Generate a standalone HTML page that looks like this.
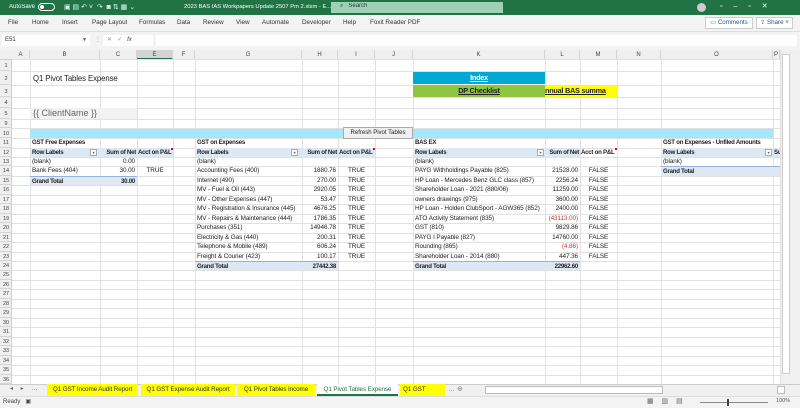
<!DOCTYPE html>
<html><head><meta charset="utf-8"><style>
*{margin:0;padding:0;box-sizing:border-box}
body{width:800px;height:408px;overflow:hidden;background:#fff;font-family:"Liberation Sans",sans-serif;position:relative;color:#222}
.a{position:absolute;white-space:nowrap;overflow:hidden}
.c{position:absolute;white-space:nowrap;overflow:hidden;font-size:6.4px;letter-spacing:-0.1px;height:9.4px;line-height:9.6px;padding:0 2px}
.r{text-align:right}.m{text-align:center}.b{font-weight:bold;font-size:6.1px;letter-spacing:-0.25px}
.hl{position:absolute;height:1px;background:#e1e1e1}
.vl{position:absolute;width:1px;background:#e1e1e1}
.hdr{background:#dde8f3}
.gt{background:#dde8f3;border-top:1px solid #95b3d7;font-weight:bold;font-size:6.1px;letter-spacing:-0.25px}
.dd{position:absolute;width:7px;height:7px;border:1px solid #aab;background:#fff;top:1px;font-size:4px;line-height:5px;text-align:center;color:#666}
.ch{position:absolute;top:50px;height:10px;font-size:6px;line-height:10px;text-align:center;color:#444;border-right:1px solid #d4d4d4}
.rh{position:absolute;left:0;width:12px;font-size:5.5px;color:#444;text-align:center;border-bottom:1px solid #d4d4d4}
.tab{position:absolute;top:384px;height:12px;font-size:6.3px;letter-spacing:-0.1px;line-height:12px;text-align:center;background:#ffff00;color:#333}
</style></head><body>
<!-- title bar -->
<div class="a" style="left:0;top:0;width:800px;height:15px;background:#217346"></div>
<div class="a" style="left:9px;top:4px;font-size:6px;color:#fff">AutoSave</div>
<div class="a" style="left:38px;top:3px;width:17px;height:8px;border:1px solid #fff;border-radius:5px"></div>
<div class="a" style="left:40px;top:5px;width:4px;height:4px;background:#fff;border-radius:50%"></div>
<div class="a" style="left:64px;top:3px;font-size:7px;color:#dfe">▣ ▤ ↶ ˅ &nbsp;↷ &nbsp;◙ ⇅ ▦ ⌄</div>
<div class="a" style="left:184px;top:4px;font-size:5.8px;color:#fff">2023 BAS IAS Workpapers Update 2507 Pm 2.xlsm - E...</div>
<div class="a" style="left:331px;top:2px;width:172px;height:11px;background:#9fd1b4"></div>
<div class="a" style="left:340px;top:3px;font-size:6px;color:#234">⌕ &nbsp;&nbsp;Search</div>
<div class="a" style="left:697px;top:3px;width:9px;height:9px;border-radius:50%;background:#ccc"></div>
<div class="a" style="left:720px;top:2px;font-size:7px;color:#fff;word-spacing:9px">▫ – ▫ ✕</div>
<!-- ribbon tabs -->
<div class="a" style="left:0;top:15px;width:800px;height:17px;background:#f3f3f3;border-bottom:1px solid #ddd"></div>
<div class="a" style="left:8px;top:19px;font-size:6.3px;color:#333">File</div>
<div class="a" style="left:32px;top:19px;font-size:6.3px;color:#333">Home</div>
<div class="a" style="left:62px;top:19px;font-size:6.3px;color:#333">Insert</div>
<div class="a" style="left:92px;top:19px;font-size:6.3px;color:#333">Page Layout</div>
<div class="a" style="left:139px;top:19px;font-size:6.3px;color:#333">Formulas</div>
<div class="a" style="left:177px;top:19px;font-size:6.3px;color:#333">Data</div>
<div class="a" style="left:203px;top:19px;font-size:6.3px;color:#333">Review</div>
<div class="a" style="left:236px;top:19px;font-size:6.3px;color:#333">View</div>
<div class="a" style="left:262px;top:19px;font-size:6.3px;color:#333">Automate</div>
<div class="a" style="left:302px;top:19px;font-size:6.3px;color:#333">Developer</div>
<div class="a" style="left:343px;top:19px;font-size:6.3px;color:#333">Help</div>
<div class="a" style="left:370px;top:19px;font-size:6.3px;color:#333">Foxit Reader PDF</div>
<div class="a" style="left:705px;top:17px;width:48px;height:12px;border:1px solid #ccc;background:#fff;font-size:6.2px;line-height:10px;text-align:center;color:#1e5a8a">▭ Comments</div>
<div class="a" style="left:756px;top:17px;width:37px;height:12px;border:1px solid #ccc;background:#fff;font-size:6.2px;line-height:10px;text-align:center;color:#1e5a8a">⇪ Share ˅</div>
<!-- formula bar -->
<div class="a" style="left:0;top:32px;width:800px;height:18px;background:#f3f3f3"></div>
<div class="a" style="left:2px;top:35px;width:88px;height:11px;background:#fff;font-size:6px;line-height:11px;padding-left:3px;color:#333">E51</div>
<div class="a" style="left:82px;top:35px;font-size:5px;line-height:11px;color:#555">▼</div>
<div class="a" style="left:95px;top:35px;font-size:6px;line-height:11px;color:#aaa">⋮</div>
<div class="a" style="left:103px;top:35px;width:50px;height:11px;background:#fff;font-size:6px;line-height:11px;color:#999;padding-left:4px">✕ &nbsp; ✓ &nbsp; <i style="color:#444">fx</i></div>
<div class="a" style="left:156px;top:35px;width:641px;height:11px;background:#fff"></div>
<!-- column headers -->
<div class="a" style="left:0;top:50px;width:800px;height:10px;background:#efefef;border-bottom:1px solid #cfcfcf"></div>
<div class="ch" style="left:12px;width:18px">A</div>
<div class="ch" style="left:30px;width:70px">B</div>
<div class="ch" style="left:100px;width:37px">C</div>
<div class="ch" style="left:137px;width:36px;background:#d3d3d3;border-bottom:2px solid #217346">E</div>
<div class="ch" style="left:173px;width:22px">F</div>
<div class="ch" style="left:195px;width:107px">G</div>
<div class="ch" style="left:302px;width:36px">H</div>
<div class="ch" style="left:338px;width:37px">I</div>
<div class="ch" style="left:375px;width:38px">J</div>
<div class="ch" style="left:413px;width:132px">K</div>
<div class="ch" style="left:545px;width:35px">L</div>
<div class="ch" style="left:580px;width:37px">M</div>
<div class="ch" style="left:617px;width:44px">N</div>
<div class="ch" style="left:661px;width:112px">O</div>
<div class="ch" style="left:773px;width:7px">P</div>
<div class="a" style="left:0;top:60px;width:12px;height:324px;background:#efefef;border-right:1px solid #cfcfcf"></div>
<div class="a" style="left:780px;top:50px;width:20px;height:334px;background:#f0f0f0;border-left:1px solid #ddd"></div>
<div class="a" style="left:782px;top:54px;width:8px;height:320px;background:#fff;border:1px solid #ccc"></div>
<div id="grid"></div>
<!-- top content -->
<div class="a" style="left:33px;top:74px;font-size:7.8px;letter-spacing:-0.1px">Q1 Pivot Tables Expense</div>
<div class="a" style="left:30px;top:108px;width:107px;height:11px;background:#f2f2f2"></div>
<div class="a" style="left:33px;top:108px;font-size:9px;color:#666">{{ ClientName }}</div>
<div class="a b" style="left:413px;top:72px;width:132px;height:12px;background:#00a8d4;color:#fff;font-size:7.3px;line-height:12px;text-align:center;text-decoration:underline">Index</div>
<div class="a b" style="left:413px;top:85px;width:132px;height:12px;background:#8dc63f;color:#222;font-size:7.3px;line-height:12px;text-align:center;text-decoration:underline">DP Checklist</div>
<div class="a b" style="left:545px;top:85px;width:72px;height:12px;background:#ffff00;color:#222;font-size:7.3px;line-height:12px;text-decoration:underline">nnual BAS summa</div>
<div class="a" style="left:30px;top:129px;width:743px;height:9px;background:#a0e8fa"></div>
<div class="a" style="left:343px;top:127px;width:70px;height:12px;background:#f0f0f0;border:1px solid #aaa;font-size:6px;line-height:10px;text-align:center">Refresh Pivot Tables</div>
<!-- row 11 titles -->
<div class="c b" style="left:30px;top:138px">GST Free Expenses</div>
<div class="c b" style="left:195px;top:138px">GST on Expenses</div>
<div class="c b" style="left:413px;top:138px">BAS EX</div>
<div class="c b" style="left:661px;top:138px">GST on Expenses - Unfiled Amounts</div>
<!-- left table -->
<div class="c b hdr" style="left:30px;top:147.5px;width:70px">Row Labels<span class="dd" style="left:60px">▾</span></div>
<div class="c b hdr r" style="left:100px;top:147.5px;width:37px;padding:0 1px">Sum of Net</div>
<div class="c b hdr" style="left:137px;top:147.5px;width:36px;padding:0 1px">Acct on P&amp;L</div>
<div class="c" style="left:30px;top:157px">(blank)</div><div class="c r" style="left:100px;top:157px;width:37px">0.00</div>
<div class="c" style="left:30px;top:166.4px">Bank Fees (404)</div><div class="c r" style="left:100px;top:166.4px;width:37px">30.00</div><div class="c m" style="left:137px;top:166.4px;width:36px">TRUE</div>
<div class="c gt" style="left:30px;top:175.8px;width:70px">Grand Total</div><div class="c gt r" style="left:100px;top:175.8px;width:37px">30.00</div>
<!-- middle table -->
<div class="c b hdr" style="left:195px;top:147.5px;width:107px">Row Labels<span class="dd" style="left:96px">▾</span></div>
<div class="c b hdr r" style="left:302px;top:147.5px;width:36px;padding:0 1px">Sum of Net</div>
<div class="c b hdr" style="left:338px;top:147.5px;width:37px;padding:0 1px">Acct on P&amp;L</div>
<div class="c" style="left:195px;top:157px">(blank)</div>
<div class="c" style="left:195px;top:166.4px">Accounting Fees (400)</div><div class="c r" style="left:302px;top:166.4px;width:36px">1880.76</div><div class="c m" style="left:338px;top:166.4px;width:37px">TRUE</div>
<div class="c" style="left:195px;top:175.8px">Internet (490)</div><div class="c r" style="left:302px;top:175.8px;width:36px">270.00</div><div class="c m" style="left:338px;top:175.8px;width:37px">TRUE</div>
<div class="c" style="left:195px;top:185.3px">MV - Fuel &amp; Oil (443)</div><div class="c r" style="left:302px;top:185.3px;width:36px">2920.05</div><div class="c m" style="left:338px;top:185.3px;width:37px">TRUE</div>
<div class="c" style="left:195px;top:194.8px">MV - Other Expenses (447)</div><div class="c r" style="left:302px;top:194.8px;width:36px">53.47</div><div class="c m" style="left:338px;top:194.8px;width:37px">TRUE</div>
<div class="c" style="left:195px;top:204.2px">MV - Registration &amp; Insurance (445)</div><div class="c r" style="left:302px;top:204.2px;width:36px">4676.25</div><div class="c m" style="left:338px;top:204.2px;width:37px">TRUE</div>
<div class="c" style="left:195px;top:213.7px">MV - Repairs &amp; Maintenance (444)</div><div class="c r" style="left:302px;top:213.7px;width:36px">1786.35</div><div class="c m" style="left:338px;top:213.7px;width:37px">TRUE</div>
<div class="c" style="left:195px;top:223.1px">Purchases (351)</div><div class="c r" style="left:302px;top:223.1px;width:36px">14946.78</div><div class="c m" style="left:338px;top:223.1px;width:37px">TRUE</div>
<div class="c" style="left:195px;top:232.6px">Electricity &amp; Gas (440)</div><div class="c r" style="left:302px;top:232.6px;width:36px">200.31</div><div class="c m" style="left:338px;top:232.6px;width:37px">TRUE</div>
<div class="c" style="left:195px;top:242.1px">Telephone &amp; Mobile (489)</div><div class="c r" style="left:302px;top:242.1px;width:36px">606.24</div><div class="c m" style="left:338px;top:242.1px;width:37px">TRUE</div>
<div class="c" style="left:195px;top:251.5px">Freight &amp; Courier (423)</div><div class="c r" style="left:302px;top:251.5px;width:36px">100.17</div><div class="c m" style="left:338px;top:251.5px;width:37px">TRUE</div>
<div class="c gt" style="left:195px;top:261px;width:107px">Grand Total</div><div class="c gt r" style="left:302px;top:261px;width:36px">27442.38</div>
<!-- BAS table -->
<div class="c b hdr" style="left:413px;top:147.5px;width:132px">Row Labels<span class="dd" style="left:124px">▾</span></div>
<div class="c b hdr r" style="left:545px;top:147.5px;width:35px;padding:0 1px">Sum of Net</div>
<div class="c b" style="left:580px;top:147.5px;width:37px;padding:0 1px">Acct on P&amp;L</div>
<div class="c" style="left:413px;top:157px">(blank)</div>
<div class="c" style="left:413px;top:166.4px">PAYG Withholdings Payable (825)</div><div class="c r" style="left:545px;top:166.4px;width:35px">21528.00</div><div class="c m" style="left:580px;top:166.4px;width:37px">FALSE</div>
<div class="c" style="left:413px;top:175.8px">HP Loan - Mercedes Benz GLC class (857)</div><div class="c r" style="left:545px;top:175.8px;width:35px">2256.24</div><div class="c m" style="left:580px;top:175.8px;width:37px">FALSE</div>
<div class="c" style="left:413px;top:185.3px">Shareholder Loan - 2021 (880/06)</div><div class="c r" style="left:545px;top:185.3px;width:35px">11259.00</div><div class="c m" style="left:580px;top:185.3px;width:37px">FALSE</div>
<div class="c" style="left:413px;top:194.8px">owners drawings (975)</div><div class="c r" style="left:545px;top:194.8px;width:35px">3600.00</div><div class="c m" style="left:580px;top:194.8px;width:37px">FALSE</div>
<div class="c" style="left:413px;top:204.2px">HP Loan - Holden ClubSport - AGW365 (852)</div><div class="c r" style="left:545px;top:204.2px;width:35px">2400.00</div><div class="c m" style="left:580px;top:204.2px;width:37px">FALSE</div>
<div class="c" style="left:413px;top:213.7px">ATO Activity Statement (835)</div><div class="c r" style="left:545px;top:213.7px;width:35px;color:#e03030">(43113.00)</div><div class="c m" style="left:580px;top:213.7px;width:37px">FALSE</div>
<div class="c" style="left:413px;top:223.1px">GST (810)</div><div class="c r" style="left:545px;top:223.1px;width:35px">9829.86</div><div class="c m" style="left:580px;top:223.1px;width:37px">FALSE</div>
<div class="c" style="left:413px;top:232.6px">PAYG I Payable (827)</div><div class="c r" style="left:545px;top:232.6px;width:35px">14760.00</div><div class="c m" style="left:580px;top:232.6px;width:37px">FALSE</div>
<div class="c" style="left:413px;top:242.1px">Rounding (865)</div><div class="c r" style="left:545px;top:242.1px;width:35px;color:#e03030">(4.86)</div><div class="c m" style="left:580px;top:242.1px;width:37px">FALSE</div>
<div class="c" style="left:413px;top:251.5px">Shareholder Loan - 2014 (880)</div><div class="c r" style="left:545px;top:251.5px;width:35px">447.36</div><div class="c m" style="left:580px;top:251.5px;width:37px">FALSE</div>
<div class="c gt" style="left:413px;top:261px;width:132px">Grand Total</div><div class="c gt r" style="left:545px;top:261px;width:35px">22962.60</div>
<!-- right table -->
<div class="c b hdr" style="left:661px;top:147.5px;width:112px">Row Labels<span class="dd" style="left:104px">▾</span></div>
<div class="c b hdr" style="left:773px;top:147.5px;width:7px;padding:0 0 0 1px">Sum</div>
<div class="c" style="left:661px;top:157px">(blank)</div>
<div class="c gt" style="left:661px;top:166.4px;width:119px">Grand Total</div>
<div class="a" style="left:171px;top:148px;width:2px;height:2px;background:#e00"></div>
<div class="a" style="left:373px;top:148px;width:2px;height:2px;background:#e00"></div>
<div class="a" style="left:615px;top:148px;width:2px;height:2px;background:#e00"></div>
<!-- sheet tabs -->
<div class="a" style="left:0;top:384px;width:800px;height:12px;background:#f0f0f0;border-top:1px solid #ccc"></div>
<div class="a" style="left:10px;top:385px;font-size:6px;color:#666;word-spacing:6px">◂ ▸ …</div>
<div class="tab" style="left:47px;width:91px">Q1 GST Income Audit Report</div>
<div class="tab" style="left:141px;width:94px">Q1 GST Expense Audit Report</div>
<div class="tab" style="left:237px;width:78px">Q1 Pivot Tables Income</div>
<div class="tab" style="left:317px;width:81px;background:#fff;color:#217346;border-bottom:2px solid #217346">Q1 Pivot Tables Expense</div>
<div class="tab" style="left:400px;width:45px;text-align:left;padding-left:3px">Q1 GST Worksh</div>
<div class="a" style="left:448px;top:385px;font-size:7px;color:#888">… ⊕</div>
<div class="a" style="left:485px;top:386px;width:178px;height:8px;background:#fff;border:1px solid #bbb"></div>
<div class="a" style="left:777px;top:386px;width:8px;height:8px;background:#fff;border:1px solid #bbb"></div>
<!-- status bar -->
<div class="a" style="left:0;top:396px;width:800px;height:12px;background:#f3f3f3;border-top:1px solid #ddd"></div>
<div class="a" style="left:3px;top:398px;font-size:6px;color:#444">Ready &nbsp;&nbsp;▣</div>
<div class="a" style="left:647px;top:397px;font-size:7px;color:#666;word-spacing:6px">▦ ▥ ▤</div>
<div class="a" style="left:700px;top:402px;width:68px;height:1px;background:#888"></div>
<div class="a" style="left:727px;top:399px;width:2px;height:7px;background:#444"></div>
<div class="a" style="left:776px;top:398px;font-size:5.5px;color:#555">100%</div>
<script>
var g=document.getElementById('grid'),h='';
var xs=[12,30,100,137,173,195,302,338,375,413,545,580,617,661,773,780];
var ys=[59,71,85,97,108,119,128,138];
for(var k=12;k<=37;k++)ys.push(138+(k-11)*9.46);
var rl=['1','2','3','4','5','9','10'];for(k=11;k<=36;k++)rl.push(''+k);
for(var i=0;i<ys.length;i++)h+='<div class="hl" style="left:12px;width:768px;top:'+ys[i].toFixed(1)+'px"></div>';
for(i=1;i<xs.length;i++)h+='<div class="vl" style="left:'+xs[i]+'px;top:60px;height:324px"></div>';
for(i=0;i<ys.length-1;i++)h+='<div class="rh" style="top:'+ys[i].toFixed(1)+'px;height:'+(ys[i+1]-ys[i]).toFixed(1)+'px;line-height:'+(ys[i+1]-ys[i]+2).toFixed(1)+'px">'+rl[i]+'</div>';
g.innerHTML=h;
</script>
</body></html>
